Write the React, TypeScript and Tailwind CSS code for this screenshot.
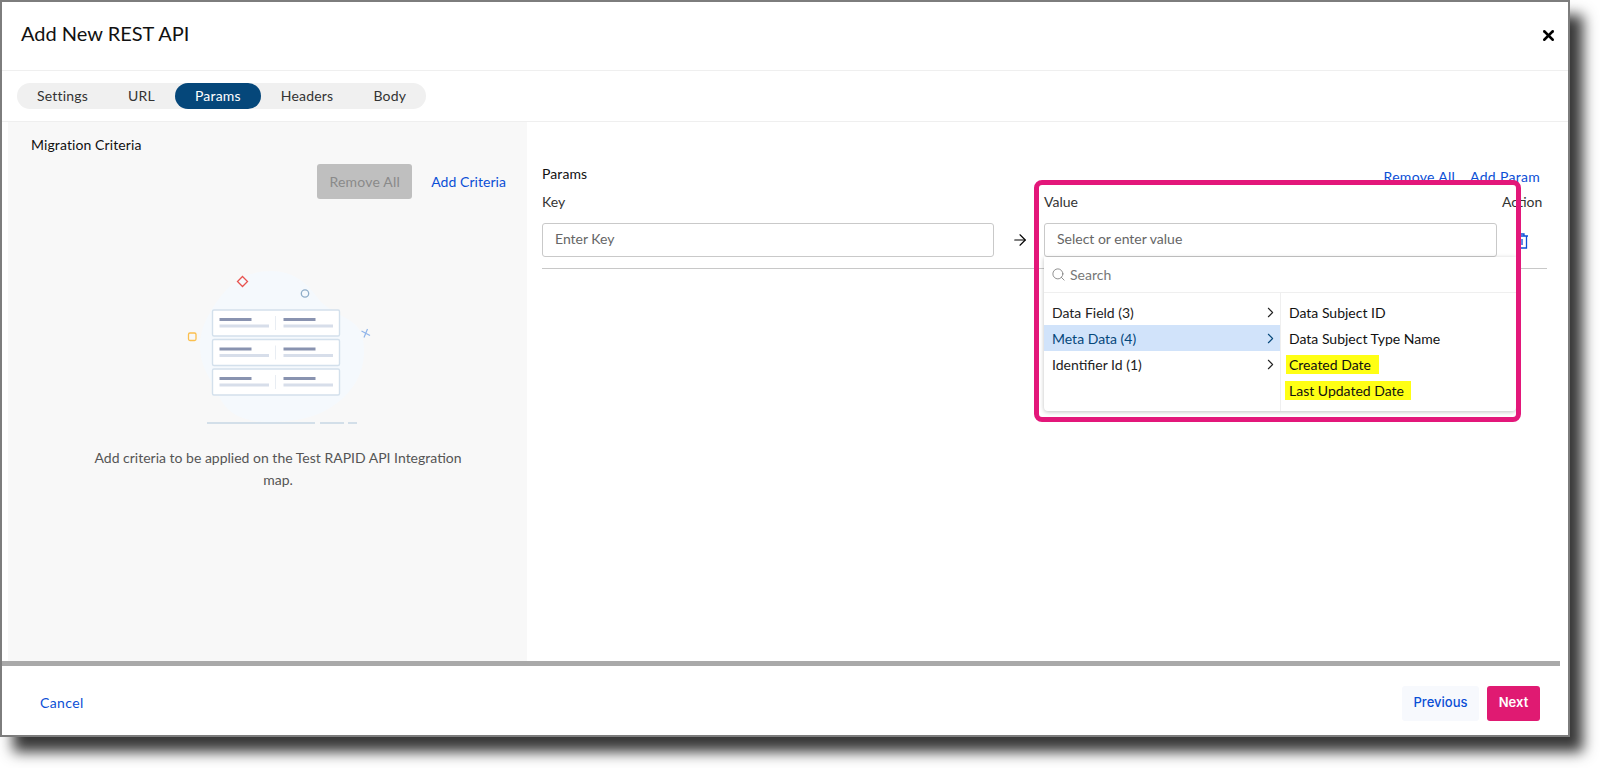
import { ArrowRight, ChevronRight, Search, X } from "lucide-react";

const font = { fontFamily: '"Lato", "Open Sans", sans-serif' };

const tabs = ["Settings", "URL", "Params", "Headers", "Body"];
const groups = ["Data Field (3)", "Meta Data (4)", "Identifier Id (1)"];

function Illustration() {
  const rows = [310, 339.5, 369];
  return (
    <svg width="220" height="180" viewBox="160 250 220 180" fill="none" className="block">
      <path d="M271 271c22 0 36 12 46 26 8 12 24 17 35 25 10 7 12 17 12 30 0 30-22 52-46 62-14 6-32 8-50 8-24 0-42-8-50-28-6-14-18-26-18-48 0-18 8-30 14-40 12-20 30-35 57-35z" fill="#f5f9fd" />
      {rows.map((y) => (
        <g key={y}>
          <rect x="212.5" y={y} width="127" height="26" rx="1.5" fill="#fff" stroke="#d3e0ec" strokeWidth="1.4" />
          <rect x="219.5" y={y + 8} width="32" height="3" fill="#8993b0" />
          <rect x="219.5" y={y + 14.5} width="49.500" height="3" fill="#d7deea" />
          <rect x="283.5" y={y + 8} width="32" height="3" fill="#8993b0" />
          <rect x="283.5" y={y + 14.500} width="49.500" height="3" fill="#d7deea" />
          <line x1="275.500" y1={y + 6} x2="275.500" y2={y + 20} stroke="#e8edf3" />
        </g>
      ))}
      <path d="M242.500 276.500l5 5-5 5-5-5z" stroke="#e8534f" strokeWidth="1.300" />
      <circle cx="305" cy="293.500" r="3.700" stroke="#8fadc8" strokeWidth="1.300" />
      <rect x="188.500" y="333" width="7.500" height="7.500" rx="1.500" stroke="#fbbf4d" strokeWidth="1.300" />
      <path d="M361.500 331l8.500 4.500M367.500 329l-3.500 8.500" stroke="#8fb4ea" strokeWidth="1.200" />
      <rect x="207" y="422" width="108" height="2" fill="#d3dfe9" />
      <rect x="320" y="422" width="24" height="2" fill="#d3dfe9" />
      <rect x="348" y="422" width="9" height="2" fill="#d3dfe9" />
    </svg>
  );
}

function TrashIcon() {
  return (
    <svg width="16" height="16" viewBox="0 0 16 16" fill="none" stroke="#0b4fd6" strokeWidth="1.300" className="block">
      <path d="M2 3h12M6 3V1h4v2M3.500 3v12h9V3M8 6v6" />
    </svg>
  );
}

export default function App() {
  return (
    <div className="relative w-[1600px] h-[768px] bg-white overflow-hidden text-[14px] text-[#1a1a1a]" style={font}>
      <div className="w-[1570px] h-[737px] border-2 border-[#7d7d7d] bg-white flex flex-col shadow-[13px_15px_13px_rgba(0,0,0,0.78)]">
        <div className="h-[69px] shrink-0 flex items-center justify-between pl-[19px] pr-[11px] pb-[1px] border-b border-[#efefef]">
          <h1 className="text-[20px] text-[#111] mt-[-5px]">Add New REST API</h1>
          <X size={17} strokeWidth={3.5} className="text-black" />
        </div>

        <div className="h-[51px] shrink-0 flex items-center pl-[15px] border-b border-[#efefef]">
          <div className="flex h-[26px] rounded-full bg-[#f0f0f0] tracking-[0.2px]">
            {tabs.map((t) => (
              <div
                key={t}
                className={
                  t === "Params"
                    ? "px-5 pb-[2px] flex items-center rounded-full bg-[#05477a] text-white"
                    : "px-5 pb-[2px] flex items-center text-[#333]"
                }
              >
                {t}
              </div>
            ))}
          </div>
        </div>

        <div className="flex-1 flex min-h-0">
          <div className="w-[519px] ml-[6px] bg-[#f8f8f8] pl-[23px] pr-[21px] pt-[14px] flex flex-col">
            <div className="leading-[18px] text-[#111] tracking-[0.1px]">Migration Criteria</div>
            <div className="flex justify-end items-center gap-[19px] mt-[10px]">
              <button className="w-[95px] h-[35px] rounded-[3px] bg-[#bfbfbf] text-[#8a8a8a] tracking-[0.2px]">Remove All</button>
              <span className="text-[#0b4fd6] tracking-[0.05px]">Add Criteria</span>
            </div>
            <div className="ml-[-23px] mr-[-21px] pl-[152px] mt-[51px]">
              <Illustration />
            </div>
            <p className="w-[380px] ml-[57px] mt-[17px] text-center leading-[22px] text-[#555]">
              Add criteria to be applied on the Test RAPID API Integration map.
            </p>
          </div>

          <div className="flex-1 pl-[15px] pr-[21px] pt-[43px]">
            <div className="flex justify-between items-start h-[18px]">
              <span className="leading-[18px] text-[#111] tracking-[0.1px]">Params</span>
              <div className="flex gap-[15px] pr-[7px] mt-[3px] leading-[18px] text-[#0b4fd6] tracking-[0.3px]">
                <span>Remove All</span>
                <span>Add Param</span>
              </div>
            </div>
            <div className="flex pb-[11px] border-b border-[#c8c8c8] mt-[10px]">
              <div className="w-[452px]">
                <div className="h-[18px] leading-[18px] text-[#333]">Key</div>
                <input
                  placeholder="Enter Key"
                  className="mt-[12px] w-full h-[34px] px-[12px] pb-[3px] rounded-[3px] border border-[#c9c9c9] bg-white placeholder:text-[#666] outline-none"
                />
              </div>
              <div className="w-[50px] pt-[30px] flex items-center pl-[17px]">
                <ArrowRight size={18} strokeWidth={1.500} className="text-black" />
              </div>
              <div className="relative w-[453px]">
                <div className="h-[18px] leading-[18px] text-[#333]">Value</div>
                <input
                  placeholder="Select or enter value"
                  className="mt-[12px] w-full h-[34px] px-[12px] pb-[3px] rounded-[3px] border border-[#c9c9c9] bg-white placeholder:text-[#666] outline-none"
                />
                <div className="absolute z-10 left-0 top-[64px] w-[472px] h-[154px] rounded-b-[4px] bg-white shadow-[0_1px_4px_rgba(0,0,0,0.25)] flex flex-col">
                  <div className="h-[36px] shrink-0 flex items-center pl-[7px] gap-[4px] border-b border-[#efefef] text-[#777]">
                    <Search size={15} strokeWidth={1.300} className="text-[#777]" />
                    <span>Search</span>
                  </div>
                  <div className="flex-1 flex">
                    <div className="w-[237px] border-r border-[#efefef] pt-[6px]">
                      {groups.map((g) => (
                        <div
                          key={g}
                          className={
                            g === "Meta Data (4)"
                              ? "h-[26px] flex items-center justify-between pl-[8px] pr-[1px] bg-[#d1e3fa] text-[#05477a]"
                              : "h-[26px] flex items-center justify-between pl-[8px] pr-[1px] text-[#222]"
                          }
                        >
                          <span>{g}</span>
                          <ChevronRight size={17} strokeWidth={1.500} />
                        </div>
                      ))}
                    </div>
                    <div className="flex-1 pt-[6px] pl-[8px] text-[#111]">
                      <div className="h-[26px] flex items-center">Data Subject ID</div>
                      <div className="h-[26px] flex items-center">Data Subject Type Name</div>
                      <div className="h-[26px] flex items-center">
                        <span className="ml-[-3px] pl-[3px] pr-[8px] h-[19px] leading-[19px] bg-[#ffff14]">Created Date</span>
                      </div>
                      <div className="h-[26px] flex items-center">
                        <span className="ml-[-4px] pl-[4px] pr-[7px] h-[19px] leading-[19px] bg-[#ffff14]">Last Updated Date</span>
                      </div>
                    </div>
                  </div>
                </div>
              </div>
              <div className="flex-1 pl-[5px]">
                <div className="h-[18px] leading-[18px] text-[#333]">Action</div>
                <div className="mt-[22px] pl-[12px]">
                  <TrashIcon />
                </div>
              </div>
            </div>
          </div>
        </div>

        <div className="h-[74px] shrink-0 flex flex-col">
          <div className="h-[5px] w-[1558px] shrink-0 bg-[#a9a9a9]" />
          <div className="flex-1 flex items-center justify-between pl-[38px] pr-[28px] pt-[5px]">
            <span className="text-[#0b4fd6] tracking-[0.4px] mb-[2px]">Cancel</span>
            <div className="flex gap-[8px]" style={{ fontFamily: '"Inter", sans-serif' }}>
              <button className="w-[77px] h-[35px] rounded-[3px] bg-[#f7f9fd] text-[#0b4fd6] text-[13px] font-medium">Previous</button>
              <button className="w-[53px] h-[35px] rounded-[3px] bg-[#e01a72] text-white text-[13px] font-semibold">Next</button>
            </div>
          </div>
        </div>
      </div>

      <div className="absolute z-20 left-[1034px] top-[180px] w-[487px] h-[242px] rounded-[8px] border-[5px] border-[#e3177a] pointer-events-none" />
    </div>
  );
}
